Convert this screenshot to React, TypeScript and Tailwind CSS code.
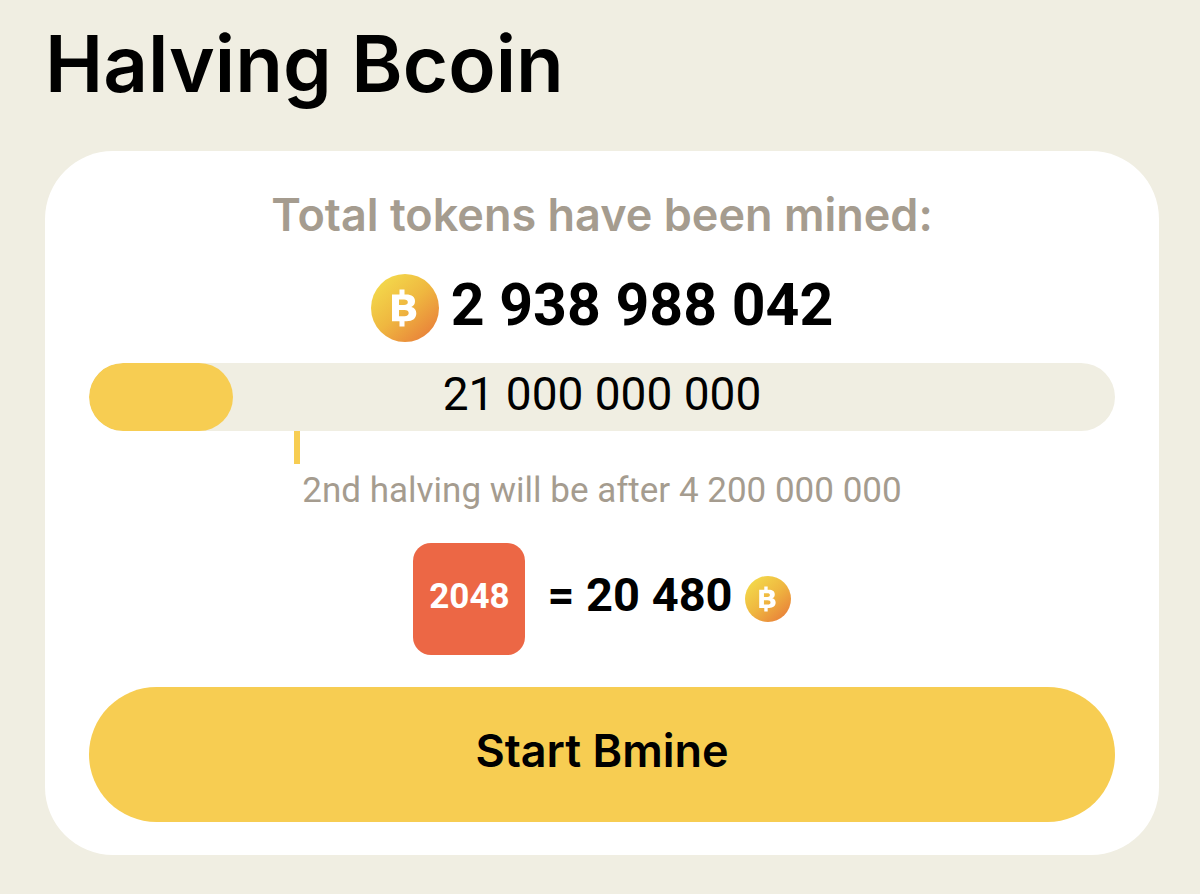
const TOTAL_SUPPLY = 21_000_000_000;
const MINED = 2_938_988_042;
const NEXT_HALVING = 4_200_000_000;
const TILE = 2048;
const REWARD = 20_480;

// 21000000000 -> "21 000 000 000"
function formatAmount(value: number) {
  return value.toString().replace(/\B(?=(\d{3})+$)/g, " ");
}

function percentOf(value: number) {
  return `${(value / TOTAL_SUPPLY) * 100}%`;
}

function Coin({ id, className }: { id: string; className: string }) {
  return (
    <svg viewBox="0 0 68 68" className={className} aria-hidden="true">
      <defs>
        <linearGradient id={id} x1="0.15" y1="0.1" x2="0.85" y2="0.9">
          <stop offset="0" stopColor="#f3d84b" />
          <stop offset="0.5" stopColor="#efb740" />
          <stop offset="1" stopColor="#e9843a" />
        </linearGradient>
      </defs>
      <circle cx="34" cy="34" r="34" fill={`url(#${id})`} />
      <path
        fill="#fff"
        fillRule="evenodd"
        d="M28.500 15.500h5v5h1.500c6 0 9 2.500 9 6.700 0 2.800-1.300 4.700-3.700 5.700 3.200.8 5 3.100 5 6.400 0 5-3.500 8-9.800 8h-2v5.200h-5v-5.200H21V20.500h7.500zM28 25.500v5.500h5c2.500 0 3.800-1 3.800-2.800s-1.300-2.700-3.800-2.700zM28 36v6.200h5.500c2.700 0 4.200-1.100 4.200-3.100s-1.500-3.100-4.200-3.100z"
      />
    </svg>
  );
}

function SupplyBar() {
  return (
    <div className="w-full">
      <div className="relative flex h-[68px] items-center justify-center overflow-hidden rounded-full bg-[#f0eee2]">
        <div
          className="absolute inset-y-0 left-0 rounded-full bg-[#f7cd52]"
          style={{ width: percentOf(MINED) }}
        />
        <span className="relative pb-1.5 font-['Roboto',sans-serif] text-[46px] leading-[56px]">
          {formatAmount(TOTAL_SUPPLY)}
        </span>
      </div>
      <div
        className="h-[33px] border-r-6 border-[#f7cd52]"
        style={{ width: `calc(${percentOf(NEXT_HALVING)} + 6px)` }}
      />
    </div>
  );
}

export default function App() {
  return (
    <main className="min-h-screen bg-[#f0eee2] pt-6 pr-[41px] pb-[39px] pl-[45px] font-['Inter',sans-serif] text-black">
      <h1 className="text-[78px] leading-[80px] font-semibold">Halving Bcoin</h1>

      <section className="mt-[47px] flex flex-col items-center rounded-[68px] bg-white px-11 pt-10 pb-[33px]">
        <h2 className="text-[45px] leading-[48px] font-semibold text-[#a59c8f]">
          Total tokens have been mined:
        </h2>

        <div className="mt-[35px] mb-[21px] flex items-center gap-3">
          <Coin id="coin-large" className="size-[68px]" />
          <span className="pb-1.5 font-['Roboto',sans-serif] text-[59px] leading-[60px] font-bold">
            {formatAmount(MINED)}
          </span>
        </div>

        <SupplyBar />

        <p className="mt-[7px] font-['Roboto',sans-serif] text-[35px] leading-[40px] text-[#a59c8f]">
          2nd halving will be after {formatAmount(NEXT_HALVING)}
        </p>

        <div className="my-8 flex items-center">
          <span className="flex size-[112px] items-center justify-center rounded-[18px] bg-[#ec6745] pb-1 font-['Roboto',sans-serif] text-[35px] leading-[40px] font-bold text-white">
            {TILE}
          </span>
          <span className="mr-3 ml-[22px] pb-2 font-['Roboto',sans-serif] text-[47px] leading-[56px] font-bold">
            = {formatAmount(REWARD)}
          </span>
          <Coin id="coin-small" className="size-[46px]" />
        </div>

        <button
          type="button"
          className="w-full cursor-pointer rounded-full bg-[#f7cd52] pt-10 pb-[47px] text-[45px] leading-[48px] font-semibold"
        >
          Start Bmine
        </button>
      </section>
    </main>
  );
}
